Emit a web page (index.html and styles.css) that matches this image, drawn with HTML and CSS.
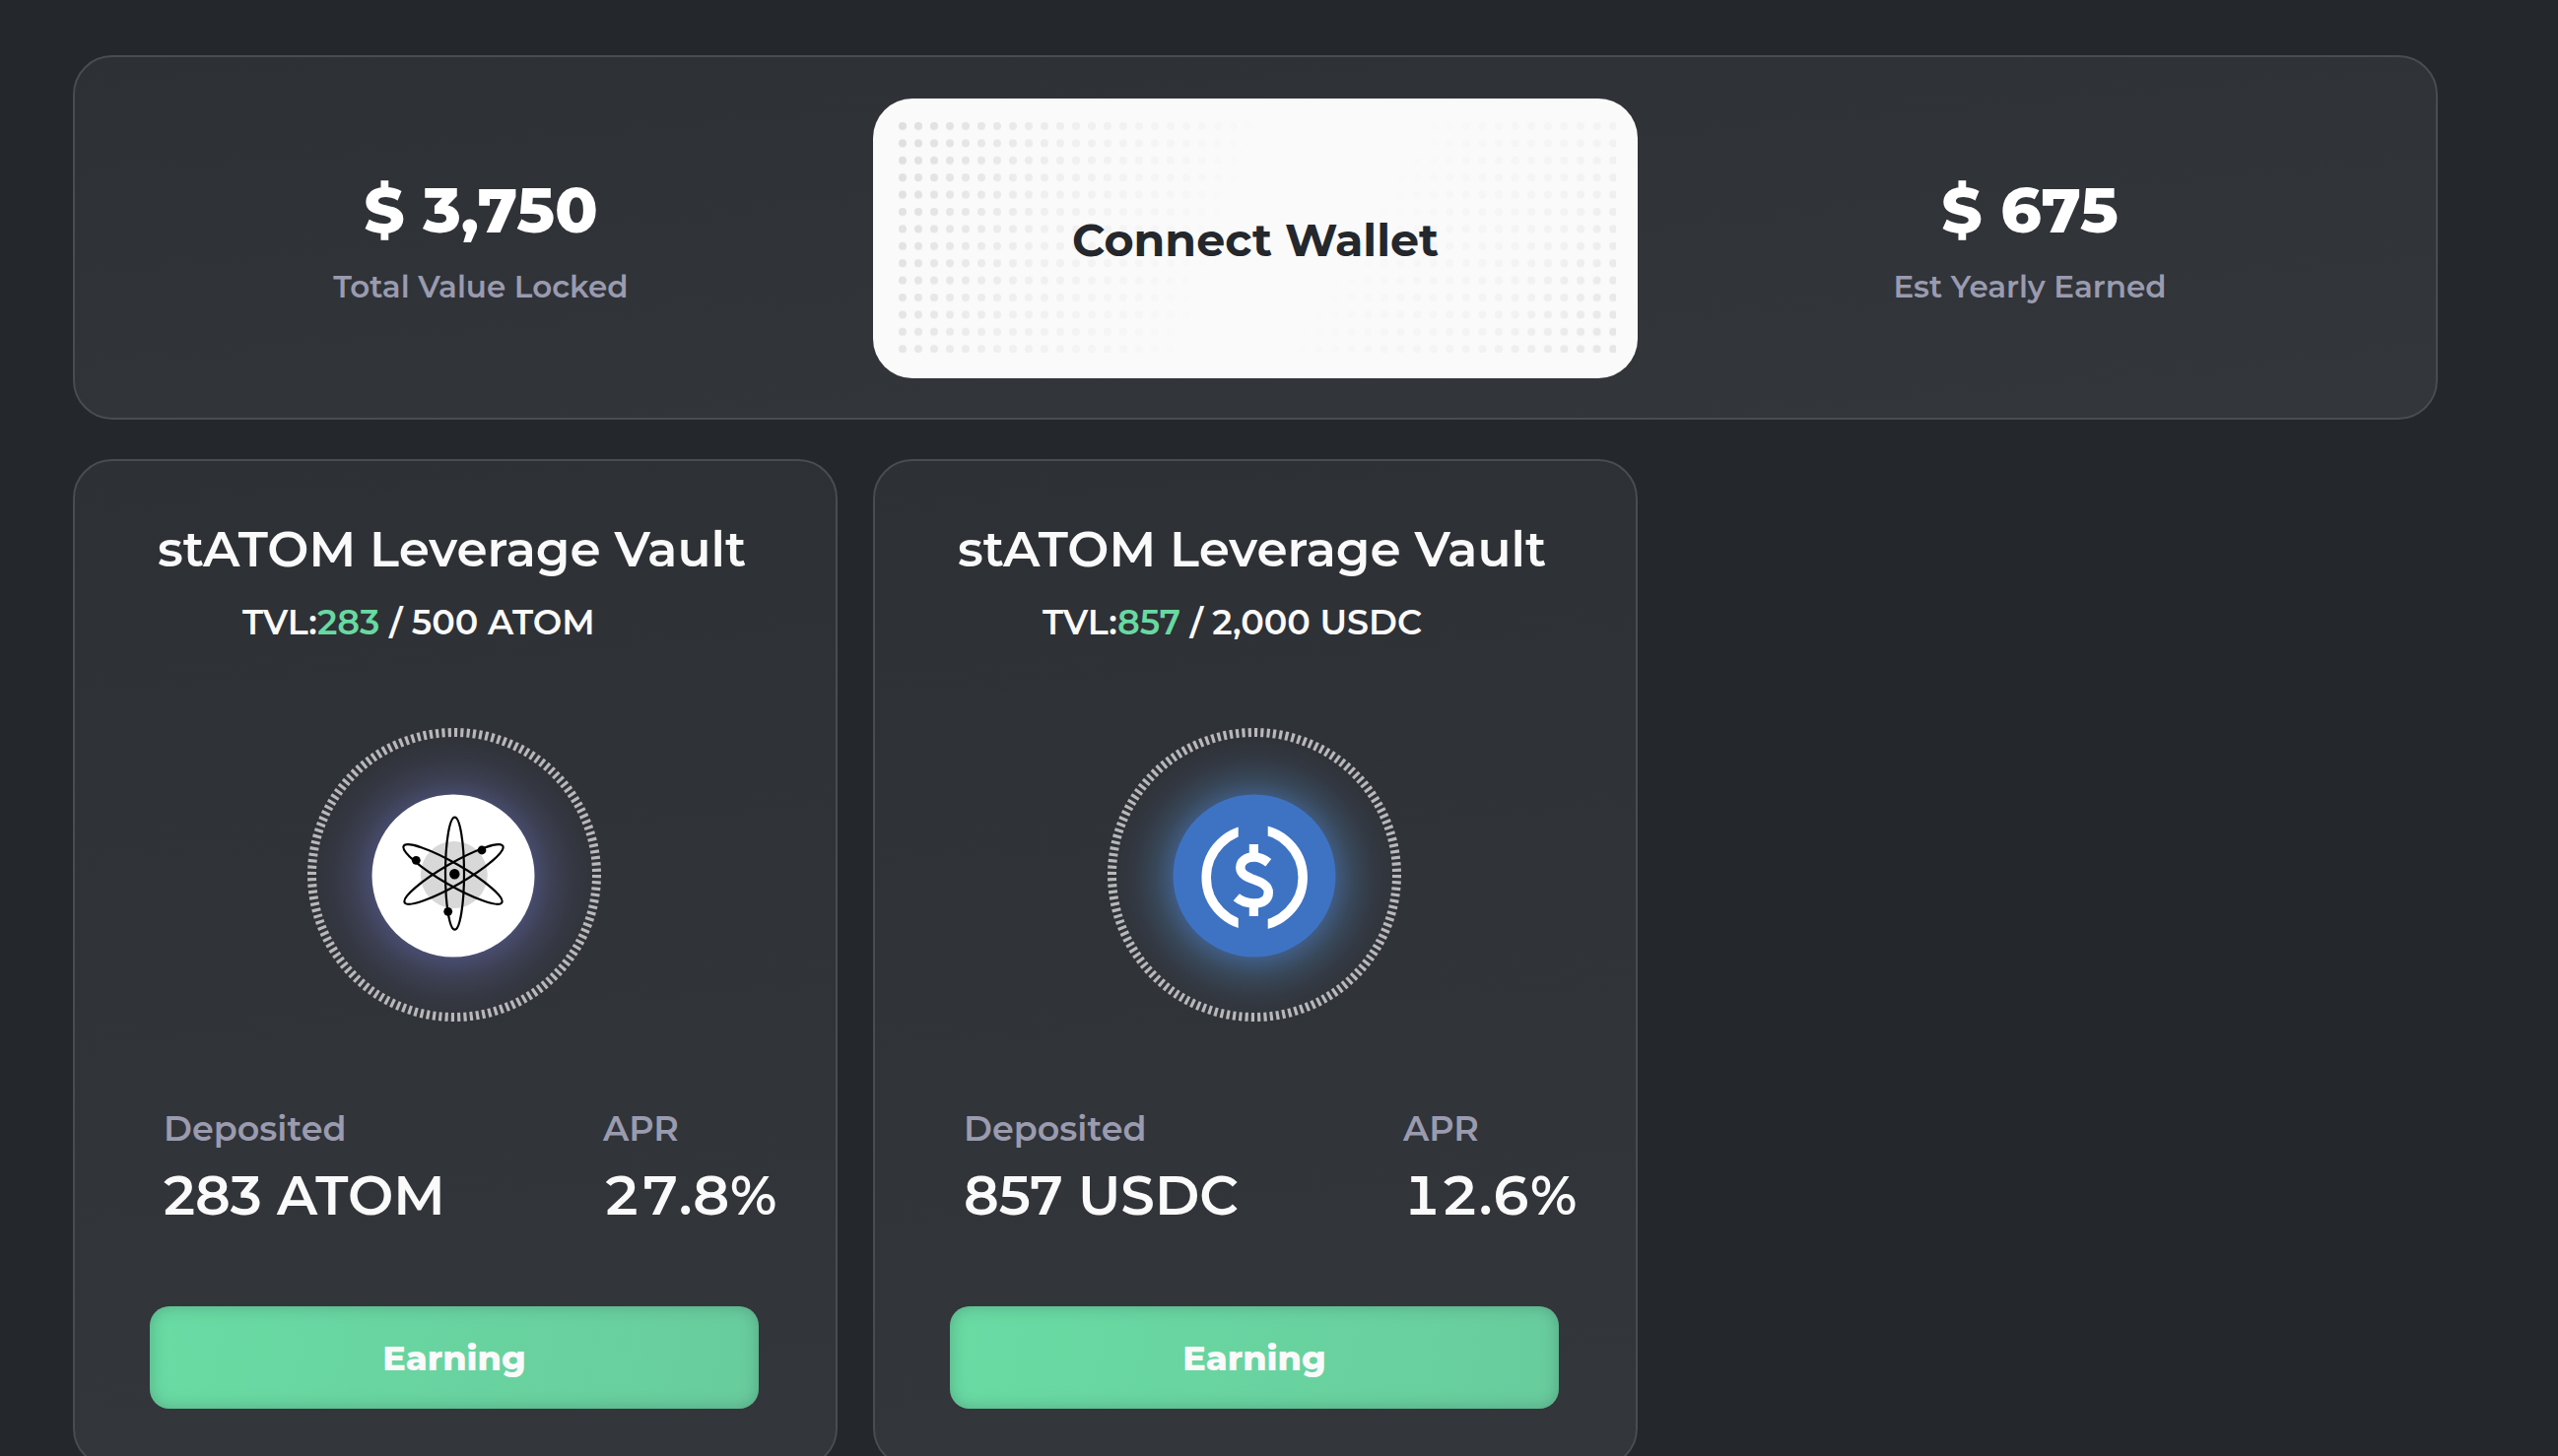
FILE: index.html
```html
<!DOCTYPE html>
<html lang="en">
<head>
<meta charset="utf-8">
<meta name="viewport" content="width=device-width, initial-scale=1">
<title>Vaults</title>
<link rel="stylesheet" href="styles.css">
</head>
<body>
<main class="page">
  <section class="summary">
    <div class="stat">
      <strong class="stat-value">$ 3,750</strong>
      <span class="stat-label">Total Value Locked</span>
    </div>
    <button class="connect" type="button">
      <svg class="connect-dots" viewBox="0 0 728 234" aria-hidden="true">
        <defs>
          <pattern id="dots-left" width="16" height="17.4" patternUnits="userSpaceOnUse"><circle cx="4" cy="4" r="4" fill="#dedede"/></pattern>
          <pattern id="dots-right" x="7.4" width="16.6" height="17.4" patternUnits="userSpaceOnUse"><circle cx="4" cy="4" r="4" fill="#e2e2e2"/></pattern>
          <linearGradient id="fade-left" gradientUnits="userSpaceOnUse" x1="0" y1="0" x2="331" y2="113"><stop offset="0" stop-color="#fff"/><stop offset="0.5" stop-color="#5c5c5c"/><stop offset="1" stop-color="#000"/></linearGradient>
          <linearGradient id="fade-right" gradientUnits="userSpaceOnUse" x1="530" y1="0" x2="778" y2="154"><stop offset="0" stop-color="#000"/><stop offset="0.58" stop-color="#484848"/><stop offset="1" stop-color="#e0e0e0"/></linearGradient>
          <mask id="mask-left"><rect width="728" height="234" fill="url(#fade-left)"/></mask>
          <mask id="mask-right"><rect width="728" height="234" fill="url(#fade-right)"/></mask>
        </defs>
        <rect width="728" height="234" fill="url(#dots-left)" mask="url(#mask-left)"/>
        <rect width="728" height="234" fill="url(#dots-right)" mask="url(#mask-right)"/>
      </svg>
      <span class="connect-text">Connect Wallet</span>
    </button>
    <div class="stat">
      <strong class="stat-value">$ 675</strong>
      <span class="stat-label">Est Yearly Earned</span>
    </div>
  </section>

  <section class="vaults">
    <article class="vault">
      <h2 class="vault-title">stATOM Leverage Vault</h2>
      <p class="vault-tvl">TVL:<span class="vault-filled">283</span> / 500 ATOM</p>
      <svg class="token" viewBox="0 0 300 300" role="img" aria-label="ATOM">
        <defs>
          <radialGradient id="glow-atom"><stop offset="0.55" stop-color="#5a5f96" stop-opacity="0.6"/><stop offset="0.7" stop-color="#565a88" stop-opacity="0.32"/><stop offset="0.85" stop-color="#50547c" stop-opacity="0.14"/><stop offset="1" stop-color="#50547c" stop-opacity="0"/></radialGradient>
        </defs>
        <circle cx="149" cy="153" r="146" fill="url(#glow-atom)"/>
        <circle class="token-ring" cx="150" cy="150" r="144.5" pathLength="288"/>
        <circle cx="149" cy="151" r="82.5" fill="#fff"/>
        <circle cx="149.8" cy="150" r="34" fill="#d8d8d8"/>
        <g fill="none" stroke="#000" stroke-width="2.2">
          <ellipse cx="150.5" cy="148.7" rx="9.5" ry="57"/>
          <ellipse cx="149.5" cy="149.5" rx="57.5" ry="11" transform="rotate(-30 149.5 149.5)"/>
          <ellipse cx="148.5" cy="149.5" rx="57.5" ry="11" transform="rotate(30 148.5 149.5)"/>
        </g>
        <circle cx="150.3" cy="149.3" r="5.2"/>
        <circle cx="178" cy="125" r="4.4"/>
        <circle cx="111.3" cy="135.3" r="4.4"/>
        <circle cx="143.7" cy="187.3" r="4.4"/>
      </svg>
      <dl class="figures">
        <div><dt>Deposited</dt><dd>283 ATOM</dd></div>
        <div><dt>APR</dt><dd class="rate">27.8%</dd></div>
      </dl>
      <button class="earning" type="button">Earning</button>
    </article>

    <article class="vault">
      <h2 class="vault-title">stATOM Leverage Vault</h2>
      <p class="vault-tvl">TVL:<span class="vault-filled">857</span> / 2,000 USDC</p>
      <svg class="token" viewBox="0 0 300 300" role="img" aria-label="USDC">
        <defs>
          <radialGradient id="glow-usdc"><stop offset="0.55" stop-color="#4d7bbd" stop-opacity="0.58"/><stop offset="0.7" stop-color="#487099" stop-opacity="0.32"/><stop offset="0.85" stop-color="#48608a" stop-opacity="0.12"/><stop offset="1" stop-color="#48608a" stop-opacity="0"/></radialGradient>
        </defs>
        <circle cx="150" cy="153" r="146" fill="url(#glow-usdc)"/>
        <circle class="token-ring" cx="150" cy="150" r="144.5" pathLength="288"/>
        <circle cx="150" cy="151" r="82.5" fill="#3e73c4"/>
        <circle cx="150.2" cy="152.8" r="49" fill="none" stroke="#fff" stroke-width="9.5"/>
        <rect x="133.7" y="96" width="30" height="114" fill="#3e73c4"/>
        <path d="M144.8 119h9.2v12h-9.2zM144.8 180h9.2v12h-9.2z" fill="#fff"/>
        <path d="M164.3 137.7C160 134.3 155.5 132 150 132C141.5 132 135.8 136.5 135.8 142.8C135.8 156.5 164.3 153.5 164.3 168C164.3 175 158.5 179 150 179C142.5 179 136.5 177 131.8 172.8" fill="none" stroke="#fff" stroke-width="9.4"/>
      </svg>
      <dl class="figures">
        <div><dt>Deposited</dt><dd>857 USDC</dd></div>
        <div><dt>APR</dt><dd class="rate">12.6%</dd></div>
      </dl>
      <button class="earning" type="button">Earning</button>
    </article>
  </section>
</main>
</body>
</html>
```
FILE: styles.css
```css
* { box-sizing: border-box; }

body {
  margin: 0;
  background: #24272c;
  color: #fafafa;
  font-family: Montserrat, Inter, sans-serif;
}

h2, p, dl, dd { margin: 0; }

button {
  border: 0;
  font-family: inherit;
  cursor: pointer;
}

.page {
  display: grid;
  gap: 40px;
  padding: 56px 122px 0 74px;
}

.summary,
.vault {
  border: 2px solid #494c51;
  border-radius: 40px;
  background: linear-gradient(175deg, #2d3035, #33363b);
}

.summary {
  display: grid;
  grid-template-columns: 1fr calc((100% - 40px) / 3) 1fr;
  align-items: center;
  padding: 42px 14px 40px;
}

.stat {
  display: flex;
  flex-direction: column;
  align-items: center;
  gap: 18px;
}

.stat-value {
  color: #fff;
  font-size: 64px;
  line-height: 80px;
  font-weight: 800;
}

.stat-label {
  color: #9a9baf;
  font-size: 31px;
  line-height: 40px;
  font-weight: 600;
}

.connect {
  position: relative;
  min-height: 284px;
  padding-top: 4px;
  border-radius: 40px;
  background: #fafafa;
  color: #24272c;
  font-size: 46px;
  line-height: 64px;
  font-weight: 700;
}

.connect-dots {
  position: absolute;
  inset: 24px 22px 26px 26px;
}

.connect-text { position: relative; }

.vaults {
  display: grid;
  grid-template-columns: repeat(3, minmax(0, 1fr));
  gap: 36px;
}

.vault {
  display: flex;
  flex-direction: column;
  padding: 58px 78px 58px 76px;
  white-space: nowrap;
}

.vault-title {
  padding-left: 8px;
  font-size: 50px;
  line-height: 64px;
  font-weight: 600;
}

.vault-tvl {
  margin-top: 18px;
  padding-left: 94px;
  font-size: 35px;
  line-height: 48px;
  font-weight: 600;
}

.vault-filled { color: #68d9a1; }

.token {
  align-self: center;
  width: 300px;
  height: 300px;
  margin-top: 82px;
  overflow: visible;
}

.token-ring {
  fill: none;
  stroke: #b8b8ba;
  stroke-width: 9;
  stroke-dasharray: 1 1;
}

.figures {
  display: grid;
  grid-template-columns: minmax(0, 1fr) 158px;
  margin-top: 84px;
  padding-left: 14px;
}

.figures dt {
  color: #9a9baf;
  font-size: 35px;
  line-height: 48px;
  font-weight: 600;
}

.figures dd {
  margin-top: 12px;
  font-size: 55px;
  line-height: 64px;
  font-weight: 600;
}

.rate { font-variant-numeric: tabular-nums; }

.earning {
  height: 104px;
  margin-top: 80px;
  border-radius: 20px;
  background: linear-gradient(100deg, #69dba3, #68cc9d);
  box-shadow: inset 0 0 16px rgba(60, 100, 90, 0.4);
  color: #fafafa;
  font-size: 35px;
  font-weight: 800;
}
```
